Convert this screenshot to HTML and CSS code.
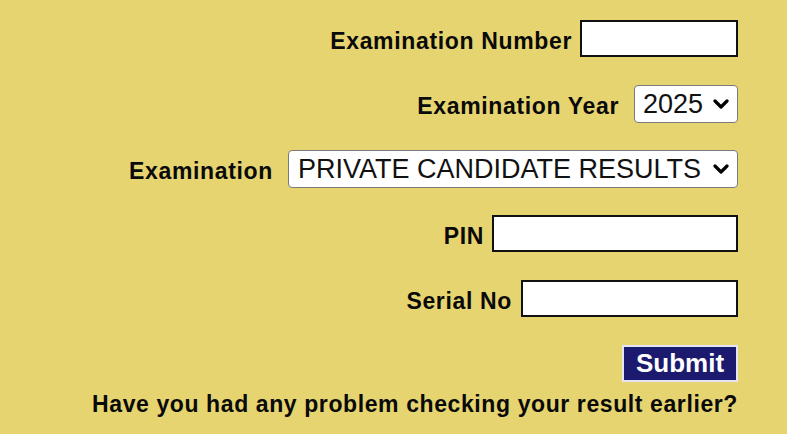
FILE: index.html
```html
<!DOCTYPE html>
<html>
<head>
<meta charset="utf-8">
<link rel="stylesheet" href="styles.css">
</head>
<body>
<form class="form">
  <div class="row row-number">
    <label class="label">Examination Number</label>
    <input class="field field-number" type="text">
  </div>
  <div class="row row-year">
    <label class="label">Examination Year</label>
    <div class="select-wrap">
      <select class="select select-year"><option>2025</option></select>
      <svg class="chevron" viewBox="0 0 16 10" width="16" height="10"><path d="M2 2 L8 8 L14 2" fill="none" stroke="#000" stroke-width="3.2" stroke-linecap="round" stroke-linejoin="round"/></svg>
    </div>
  </div>
  <div class="row row-exam">
    <label class="label">Examination</label>
    <div class="select-wrap">
      <select class="select select-exam"><option>PRIVATE CANDIDATE RESULTS</option></select>
      <svg class="chevron" viewBox="0 0 16 10" width="16" height="10"><path d="M2 2 L8 8 L14 2" fill="none" stroke="#000" stroke-width="3.2" stroke-linecap="round" stroke-linejoin="round"/></svg>
    </div>
  </div>
  <div class="row row-pin">
    <label class="label">PIN</label>
    <input class="field field-pin" type="text">
  </div>
  <div class="row row-serial">
    <label class="label">Serial No</label>
    <input class="field field-serial" type="text">
  </div>
  <div class="row row-submit">
    <button class="submit" type="button">Submit</button>
  </div>
  <p class="question">Have you had any problem checking your result earlier?</p>
</form>
</body>
</html>
```

FILE: styles.css
```css
html, body {
  margin: 0;
  padding: 0;
  background: #e6d470;
  width: 787px;
  height: 434px;
  overflow: hidden;
  font-family: "Liberation Sans", Arial, sans-serif;
}

.form {
  display: flex;
  flex-direction: column;
  align-items: flex-end;
  padding: 20px 49px 0 0;
  gap: 28px;
}

.row {
  display: flex;
  align-items: center;
  justify-content: flex-end;
  gap: 8px;
  height: 37px;
}

.row-year, .row-exam { gap: 15px; }
.row-serial { gap: 9px; }

.label {
  font-weight: bold;
  font-size: 23px;
  letter-spacing: 0.65px;
  color: #0a0a0a;
  margin-top: 5px;
}

.field {
  box-sizing: border-box;
  height: 37px;
  border: 2px solid #111;
  background: #fff;
  border-radius: 0;
  padding: 0 4px;
  margin: 0;
}

.field-number { width: 158px; }
.field-pin { width: 246px; }
.field-serial { width: 217px; }

.select-wrap {
  position: relative;
  display: flex;
}

.select {
  -webkit-appearance: none;
  appearance: none;
  box-sizing: border-box;
  height: 38px;
  border: 1.5px solid #7a7a7a;
  border-radius: 4px;
  background: #fff;
  color: #111;
  font-family: "Liberation Sans", Arial, sans-serif;
  font-size: 27px;
  margin: 0;
  padding: 0 30px 0 8px;
}

.select-year { width: 104px; }
.select-exam { width: 450px; padding-left: 9px; }

.chevron {
  position: absolute;
  right: 9px;
  top: 14px;
  pointer-events: none;
}

.submit {
  box-sizing: border-box;
  width: 116px;
  height: 37px;
  background: #1b1a6e;
  color: #fff;
  border: 2px solid #e4e4f4;
  font-family: "Liberation Sans", Arial, sans-serif;
  font-weight: bold;
  font-size: 26px;
  padding: 0;
  margin: 0;
}

.question {
  margin: -19px 0 0;
  font-weight: bold;
  font-size: 23px;
  letter-spacing: 0.6px;
  line-height: 26px;
  color: #0a0a0a;
}
```
